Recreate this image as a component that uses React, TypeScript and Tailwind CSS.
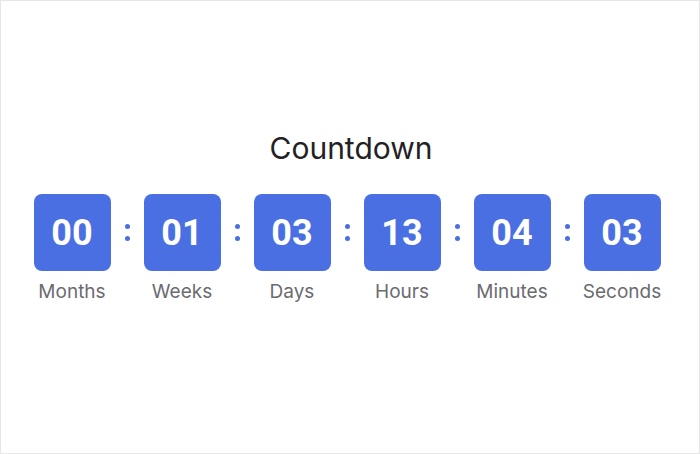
import React from "react";

const units = [
  { value: "00", label: "Months" },
  { value: "01", label: "Weeks" },
  { value: "03", label: "Days" },
  { value: "13", label: "Hours" },
  { value: "04", label: "Minutes" },
  { value: "03", label: "Seconds" },
];

function Separator() {
  return (
    <div className="flex h-[77px] w-[33px] flex-col items-center justify-center gap-[7px]">
      <span className="h-[5px] w-[5px] rounded-full bg-[#4a6fe3]" />
      <span className="h-[5px] w-[5px] rounded-full bg-[#4a6fe3]" />
    </div>
  );
}

export default function App() {
  return (
    <div className="flex h-[454px] w-[700px] flex-col items-center border border-[#e6e6e6] bg-white font-['Inter',sans-serif]">
      <h1 className="mt-[127px] pl-[2px] text-[30px] leading-[40px] font-normal text-[#222226]">Countdown</h1>
      <div className="mt-[26px] flex items-start pr-[6px]">
        {units.map((u, i) => (
          <React.Fragment key={u.label}>
            {i > 0 && <Separator />}
            <div className="flex w-[77px] flex-col items-center">
              <div className="flex h-[77px] w-[77px] items-center justify-center rounded-[8px] bg-[#4a6fe3] pt-[1px] font-['Roboto',sans-serif] text-[36px] font-bold text-white">
                {u.value}
              </div>
              <div className="mt-[8px] whitespace-nowrap text-[19px] leading-[26px] text-[#6b6b70]">{u.label}</div>
            </div>
          </React.Fragment>
        ))}
      </div>
    </div>
  );
}
